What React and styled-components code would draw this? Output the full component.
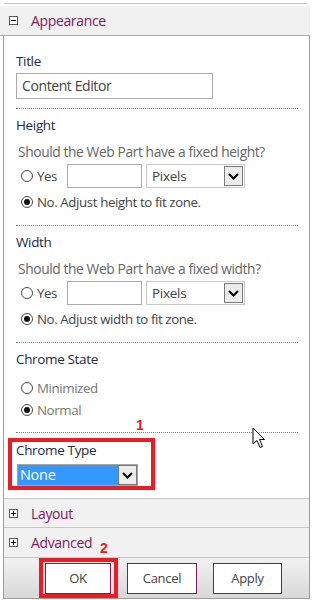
import React from 'react';
import styled, { createGlobalStyle } from 'styled-components';

const GlobalStyle = createGlobalStyle`
  html, body { margin: 0; padding: 0; background: #fff; }
  body { font-family: "Open Sans", "Noto Sans", sans-serif; }
  * { box-sizing: border-box; }
`;

const Screen = styled.div`
  position: relative;
  width: 313px;
  height: 600px;
  overflow: hidden;
  background: #fff;
`;

const Cap = styled.div`
  width: 303px;
  height: 4px;
  margin: 0 0 2px 4px;
  border-bottom: 1px solid #c4c4c4;
`;

const GroupHead = styled.div`
  display: flex;
  align-items: center;
  gap: 13px;
  height: 30px;
  padding-left: ${({ open }) => (open ? '9px' : '5px')};
  width: ${({ open }) => (open ? '310px' : 'auto')};
  background: #f1f1f1;
  border-bottom: 1px solid ${({ open }) => (open ? '#a8a8a8' : '#c9c9c9')};
  border-top: ${({ first }) => (first ? '1px solid #c9c9c9' : 'none')};
  color: #80205c;
  font-size: 14px;
  letter-spacing: -0.35px;
`;

const Toggle = styled.span`
  position: relative;
  width: 9px;
  height: 9px;
  border: 1px solid #5a5a5a;
  background: #fff;
  flex: none;
  &::before {
    content: '';
    position: absolute;
    left: 1px;
    top: 3px;
    width: 5px;
    height: 1px;
    background: #000;
  }
  &::after {
    content: '';
    display: ${({ plus }) => (plus ? 'block' : 'none')};
    position: absolute;
    left: 3px;
    top: 1px;
    width: 1px;
    height: 5px;
    background: #000;
  }
`;

const Body = styled.div`
  margin-left: 3px;
  width: 307px;
  border-left: 1px solid #9d9d9d;
  border-right: 1px solid #9d9d9d;
`;

const Section = styled.div`
  margin: 0 11px 0 12px;
  padding: ${({ pad }) => pad};
  border-bottom: ${({ last }) => (last ? 'none' : '1px dotted #5f86d4')};
`;

const Label = styled.div`
  font-size: 13.5px;
  line-height: 19px;
  color: #262a3f;
  letter-spacing: -0.35px;
`;

const Hint = styled.div`
  margin: 7px 0 0 2px;
  font-size: 13.8px;
  line-height: 19px;
  color: #666;
  letter-spacing: -0.4px;
`;

const TextBox = styled.div`
  width: ${({ w }) => w}px;
  height: ${({ h }) => h}px;
  margin-top: ${({ mt }) => mt || 0}px;
  border: 1px solid #ababab;
  padding-left: 5px;
  font-size: 14px;
  line-height: ${({ h }) => h - 2}px;
  color: #444;
  letter-spacing: -0.4px;
`;

const Row = styled.div`
  display: flex;
  align-items: center;
  margin: ${({ m }) => m};
  padding-left: 5px;
  height: ${({ h }) => h}px;
  font-size: 13.3px;
  color: ${({ soft }) => (soft ? '#777' : '#444')};
  letter-spacing: -0.4px;
`;

const Radio = styled.span`
  position: relative;
  flex: none;
  width: 12px;
  height: 12px;
  margin-right: 4px;
  border-radius: 50%;
  border: 1px solid #4a4a4a;
  background: #fff;
  &::after {
    content: '';
    display: ${({ checked }) => (checked ? 'block' : 'none')};
    position: absolute;
    left: 2px;
    top: 2px;
    width: 6px;
    height: 6px;
    border-radius: 50%;
    background: #111;
  }
`;

const Select = styled.div`
  display: flex;
  width: ${({ w }) => w}px;
  height: ${({ h }) => h}px;
  margin: ${({ m }) => m || 0};
  border: 1px solid ${({ active }) => (active ? '#a5a5a5' : '#c8c8c8')};
  background: #fff;
  font-size: ${({ active }) => (active ? '14.5px' : '13.5px')};
  color: #444;
  letter-spacing: -0.3px;
`;

const SelectValue = styled.div`
  flex: 1;
  padding-left: ${({ active }) => (active ? '2px' : '5px')};
  line-height: ${({ h }) => h - 2}px;
  background: ${({ active }) => (active ? '#3399ff' : 'transparent')};
  color: ${({ active }) => (active ? '#fff' : '#444')};
`;

const SelectButton = styled.div`
  display: flex;
  align-items: center;
  justify-content: center;
  width: 19px;
  margin: ${({ active }) => (active ? '0' : '1px 1px 1px 0')};
  border: 1px solid #7a7a7a;
  background: #ececec;
`;

const Chevron = () => (
  <svg width="11" height="7" viewBox="0 0 11 7">
    <polyline points="1,1 5.5,5.5 10,1" fill="none" stroke="#000" strokeWidth="2" />
  </svg>
);

const Spacer = styled.span`
  width: ${({ w }) => w}px;
  flex: none;
`;

const ButtonBar = styled.div`
  display: flex;
  gap: 16px;
  height: 41px;
  padding: 5px 0 0 41px;
  background: linear-gradient(#f2f2f2, #d8d8d8);
  border-bottom: 1px solid #9d9d9d;
`;

const Button = styled.div`
  width: ${({ w }) => w}px;
  height: 31px;
  border: 1px solid #7d1c57;
  background: #fff;
  font-size: 13px;
  line-height: 29px;
  text-align: center;
  color: #444;
  letter-spacing: -0.3px;
`;

const Callout = styled.div`
  position: absolute;
  left: ${({ x }) => x}px;
  top: ${({ y }) => y}px;
  width: ${({ w }) => w}px;
  height: ${({ h }) => h}px;
  border: 4px solid #ed1c24;
  pointer-events: none;
`;

const Step = styled.div`
  position: absolute;
  left: ${({ x }) => x}px;
  top: ${({ y }) => y}px;
  font-family: "Liberation Sans", Arial, sans-serif;
  font-weight: bold;
  font-size: 14px;
  line-height: 14px;
  color: #ed1c24;
`;

const Pointer = styled.svg`
  position: absolute;
  left: 252px;
  top: 427px;
`;

function FixedSize({ hint }) {
  return (
    <>
      <Hint>{hint}</Hint>
      <Row h={24} m="3px 0 0 0">
        <Radio />
        Yes
        <Spacer w={10} />
        <TextBox w={75} h={24} />
        <Spacer w={4} />
        <Select w={99} h={24}>
          <SelectValue h={24}>Pixels</SelectValue>
          <SelectButton>
            <Chevron />
          </SelectButton>
        </Select>
      </Row>
    </>
  );
}

export default function App() {
  return (
    <Screen>
      <GlobalStyle />
      <Cap />
      <GroupHead open>
        <Toggle />
        Appearance
      </GroupHead>
      <Body>
        <Section pad="16px 0 9px 0">
          <Label>Title</Label>
          <TextBox w={197} h={26} mt={2}>Content Editor</TextBox>
        </Section>
        <Section pad="7px 0 14px 0">
          <Label>Height</Label>
          <FixedSize hint="Should the Web Part have a fixed height?" />
          <Row h={19} m="4px 0 0 0">
            <Radio checked />
            No. Adjust height to fit zone.
          </Row>
        </Section>
        <Section pad="7px 0 14px 0">
          <Label>Width</Label>
          <FixedSize hint="Should the Web Part have a fixed width?" />
          <Row h={19} m="4px 0 0 0">
            <Radio checked />
            No. Adjust width to fit zone.
          </Row>
        </Section>
        <Section pad="7px 0 13px 0">
          <Label>Chrome State</Label>
          <Row h={19} m="9px 0 0 0" soft>
            <Radio />
            Minimized
          </Row>
          <Row h={19} m="3px 0 0 0" soft>
            <Radio checked />
            Normal
          </Row>
        </Section>
        <Section pad="8px 0 12px 0" last>
          <Label>Chrome Type</Label>
          <Select w={121} h={22} m="4px 0 0 1px" active>
            <SelectValue h={22} active>None</SelectValue>
            <SelectButton active>
              <Chevron />
            </SelectButton>
          </Select>
        </Section>
        <GroupHead first>
          <Toggle plus />
          Layout
        </GroupHead>
        <GroupHead>
          <Toggle plus />
          Advanced
        </GroupHead>
        <ButtonBar>
          <Button w={66}>OK</Button>
          <Button w={70}>Cancel</Button>
          <Button w={69}>Apply</Button>
        </ButtonBar>
      </Body>

      <Step x={136} y={418}>1</Step>
      <Callout x={8} y={438} w={147} h={52} />
      <Step x={100} y={541}>2</Step>
      <Callout x={39} y={558} w={79} h={40} />
      <Pointer width="14" height="22" viewBox="0 0 14 22">
        <path d="M1 1 L1 17 L5 13.5 L8 20.5 L10.5 19.5 L7.5 12.5 L12.5 12.5 Z" fill="#fff" stroke="#000" strokeWidth="1" strokeLinejoin="miter" />
      </Pointer>
    </Screen>
  );
}
